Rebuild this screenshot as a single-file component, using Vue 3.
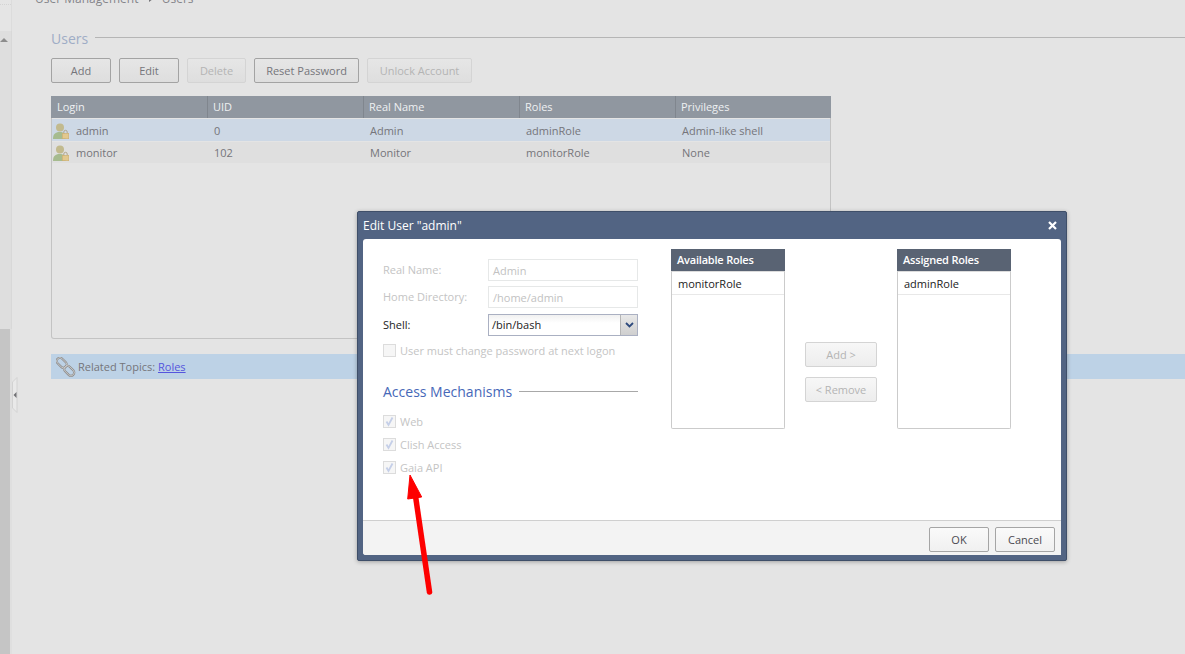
<script setup>
const users = [
  { login: 'admin', uid: '0', name: 'Admin', roles: 'adminRole', priv: 'Admin-like shell', selected: true },
  { login: 'monitor', uid: '102', name: 'Monitor', roles: 'monitorRole', priv: 'None', selected: false },
]
const access = ['Web', 'Clish Access', 'Gaia API']
</script>

<template>
  <div class="page">
    <aside class="rail">
      <div class="rail-head"></div>
      <div class="rail-top">
        <span class="up"></span>
      </div>
      <div class="rail-low"></div>
      <svg class="grip" width="6" height="36" viewBox="0 0 6 36">
        <path d="M5 .5L.5 5v26L5 35.500z" fill="#e9e9e9" stroke="#d2d2d2" />
        <path d="M1.500 18L4.500 15v6z" fill="#707074" />
      </svg>
    </aside>

    <main class="content">
      <div class="crumbs">User Management <span class="sep"></span> Users</div>

      <div class="legend"><span>Users</span><i></i></div>

      <div class="toolbar">
        <button class="btn w60">Add</button>
        <button class="btn w60">Edit</button>
        <button class="btn w59 off">Delete</button>
        <button class="btn w105">Reset Password</button>
        <button class="btn w105 off">Unlock Account</button>
      </div>

      <div class="grid">
        <div class="row head">
          <div>Login</div><div>UID</div><div>Real Name</div><div>Roles</div><div>Privileges</div>
        </div>
        <div v-for="u in users" :key="u.login" class="row" :class="{ selected: u.selected }">
          <div class="login">
            <svg width="16" height="16" viewBox="0 0 16 16">
              <circle cx="7" cy="4.500" r="4" fill="#c2ba8e" />
              <path d="M0 16c0-5 2.500-7 6.500-7 2.500 0 4 .5 6 2v5z" fill="#a6bb8f" />
              <rect x="9.300" y="10.300" width="6.400" height="5.400" fill="#e2c88e" stroke="#cfb06e" stroke-width=".6" />
              <path d="M10.800 10.300V9a1.700 1.700 0 0 1 3.400 0v1.300" fill="none" stroke="#b0a68c" />
            </svg>
            <span>{{ u.login }}</span>
          </div>
          <div>{{ u.uid }}</div>
          <div>{{ u.name }}</div>
          <div>{{ u.roles }}</div>
          <div>{{ u.priv }}</div>
        </div>
      </div>

      <div class="related">
        <svg width="20" height="20" viewBox="0 0 20 20" fill="none">
          <g stroke="#8f8f8f" stroke-width="2.200">
            <rect x="0" y="2.500" width="11.500" height="6.500" rx="3.200" transform="rotate(45 5.700 5.700)" />
            <rect x="7.500" y="10.500" width="11.500" height="6.500" rx="3.200" transform="rotate(45 13.200 13.700)" />
          </g>
          <g stroke="#cfcfcf" stroke-width=".8">
            <rect x="0" y="2.500" width="11.500" height="6.500" rx="3.200" transform="rotate(45 5.700 5.700)" />
            <rect x="7.500" y="10.500" width="11.500" height="6.500" rx="3.200" transform="rotate(45 13.200 13.700)" />
          </g>
        </svg>
        <span>Related Topics: <a>Roles</a></span>
      </div>
    </main>

    <div class="dialog">
      <div class="title">
        <span>Edit User "admin"</span>
        <svg class="close" width="9" height="9" viewBox="0 0 9 9">
          <path d="M1 1l7 7M8 1L1 8" stroke="#fff" stroke-width="2.200" />
        </svg>
      </div>
      <div class="body">
        <div class="main">
          <div class="left">
            <div class="field off"><label>Real Name:</label><div class="input">Admin</div></div>
            <div class="field off"><label>Home Directory:</label><div class="input">/home/admin</div></div>
            <div class="field shell"><label>Shell:</label>
              <div class="select">
                <span>/bin/bash</span>
                <b><svg width="9" height="6" viewBox="0 0 9 6"><path d="M1 1l3.500 3.500L8 1" fill="none" stroke="#2e4a7d" stroke-width="1.800" /></svg></b>
              </div>
            </div>
            <div class="check plain"><span class="box"></span>User must change password at next logon</div>

            <div class="section"><span>Access Mechanisms</span><i></i></div>

            <div v-for="a in access" :key="a" class="check">
              <span class="box">
                <svg width="11" height="11" viewBox="0 0 11 11"><path d="M2.500 5.500l2 3.500L8.500 1.500" fill="none" stroke="#c5cfe8" stroke-width="1.800" /></svg>
              </span>{{ a }}
            </div>
          </div>

          <div class="roles">
            <div class="list">
              <div class="list-head">Available Roles</div>
              <div class="list-body"><div class="item">monitorRole</div></div>
            </div>
            <div class="mover">
              <button class="btn mini off">Add &gt;</button>
              <button class="btn mini off">&lt; Remove</button>
            </div>
            <div class="list">
              <div class="list-head">Assigned Roles</div>
              <div class="list-body"><div class="item">adminRole</div></div>
            </div>
          </div>
        </div>
        <div class="footer">
          <button class="btn foot">OK</button>
          <button class="btn foot">Cancel</button>
        </div>
      </div>
    </div>

    <svg class="arrow" width="40" height="130" viewBox="0 0 40 130">
      <path d="M10 5L7.700 29 21.700 27z" fill="#fe0000" stroke="#fe0000" stroke-linejoin="round" />
      <path d="M15.500 26L29.500 122" stroke="#fe0000" stroke-width="5.500" stroke-linecap="round" />
    </svg>
  </div>
</template>

<style scoped>
.page {
  position: relative;
  display: flex;
  width: 1185px;
  height: 654px;
  overflow: hidden;
  background: #e4e4e4;
  color: #75757a;
  font: 11px "Open Sans", "Liberation Sans", sans-serif;
}

.rail {
  position: relative;
  display: flex;
  flex-direction: column;
  flex: 0 0 12px;
}

.rail-head {
  height: 31px;
  background: #e5e5e5;
  border-right: 1px solid #dcdcdc;
  box-sizing: border-box;
}

.rail-head::before {
  content: "";
  display: block;
  height: 4px;
  border-bottom: 1px dotted #d4d4d4;
}

.rail-top {
  height: 298px;
  background: #dedede;
  border-right: 1px solid #d8d8d8;
  box-sizing: border-box;
}

.up {
  display: block;
  width: 0;
  margin: 7px 0 0 0;
  border: 4px solid transparent;
  border-top: 0;
  border-bottom-color: #8d8d8d;
}

.rail-low {
  flex: 1;
  background: #c5c5c5;
  border-right: 2px solid #dfdfdf;
}

.grip {
  position: absolute;
  left: 12px;
  top: 377px;
}

.content {
  flex: 1;
  min-width: 0;
  padding: 0 0 0 39px;
}

.crumbs {
  margin: -9px 0 0 -16px;
  height: 16px;
  line-height: 16px;
  font-size: 12px;
  color: #85858a;
}

.sep {
  display: inline-block;
  margin: 0 6px 1px 7px;
  border: 3px solid transparent;
  border-right: 0;
  border-left: 4px solid #76767a;
}

.legend {
  display: flex;
  align-items: center;
  margin-top: 22px;
  height: 18px;
  font-size: 14px;
  color: #9fadc6;
}

.legend i {
  flex: 1;
  height: 1px;
  margin: 0 0 2px 7px;
  background: #b5b5b5;
}

.toolbar {
  display: flex;
  gap: 8px;
  margin-top: 11px;
}

.btn {
  height: 25px;
  padding: 0;
  background: linear-gradient(#e6e6e6, #dedede);
  border: 1px solid #a3a3a3;
  border-radius: 2px;
  color: #75757a;
  font: inherit;
  box-sizing: border-box;
}

.btn.off {
  border-color: #d4d4d4;
  color: #b4b4b4;
}

.w60 { width: 60px; }
.w59 { width: 59px; }
.w105 { width: 105px; }

.grid {
  width: 780px;
  height: 243px;
  margin-top: 13px;
  border: 1px solid #c3c3c3;
  border-top: 0;
  border-radius: 0 0 3px 3px;
  box-sizing: border-box;
}

.row {
  display: grid;
  grid-template-columns: 156px 156px 156px 156px 1fr;
  height: 21px;
  line-height: 22px;
  background: #dfdfdf;
}

.row > div {
  padding-left: 6px;
}

.row.selected {
  height: 22px;
  line-height: 24px;
  background: #cdd8e5;
  margin-bottom: 1px;
}

.row.head {
  height: 22px;
  margin: 0 -1px 1px -1px;
  background: #9097a0;
  color: #eef0f2;
}

.row.head > div + div {
  padding-left: 5px;
  border-left: 1px solid #80868e;
}

.row > .login {
  display: flex;
  align-items: center;
  gap: 7px;
  padding-left: 1px;
}

.related {
  display: flex;
  align-items: center;
  gap: 2px;
  height: 25px;
  margin-top: 15px;
  padding-left: 5px;
  background: #bdd2e6;
  line-height: 25px;
}

.related a {
  color: #5555dd;
  text-decoration: underline;
}

.dialog {
  position: absolute;
  left: 357px;
  top: 211px;
  width: 710px;
  height: 350px;
  padding: 0 5px 5px;
  background: #526483;
  border: 1px solid #3f4f69;
  border-radius: 2px;
  box-shadow: 0 1px 4px rgba(0, 0, 0, .3);
  box-sizing: border-box;
  display: flex;
  flex-direction: column;
}

.title {
  display: flex;
  align-items: center;
  justify-content: space-between;
  flex: 0 0 27px;
  padding: 0 4px 1px 0;
  box-sizing: border-box;
  color: #fff;
  font-size: 12px;
}

.body {
  flex: 1;
  display: flex;
  flex-direction: column;
  min-height: 0;
  background: #fff;
  border-radius: 3px 3px 0 3px;
  overflow: hidden;
}

.main {
  flex: 1;
  display: flex;
  padding: 10px 0 0 20px;
}

.left {
  width: 255px;
  padding-top: 10px;
  color: #c4c4c4;
}

.field {
  display: flex;
  align-items: center;
  height: 22px;
  margin-bottom: 5px;
}

.field.shell {
  margin-top: 6px;
}

.field label {
  flex: 0 0 105px;
  margin-bottom: 2px;
}

.field:not(.off) label {
  color: #222;
}

.input {
  flex: 1;
  height: 22px;
  line-height: 22px;
  padding-left: 4px;
  border: 1px solid #e6e8e8;
  box-sizing: border-box;
  color: #c2c2c2;
}

.select {
  flex: 1;
  display: flex;
  justify-content: space-between;
  height: 22px;
  padding-left: 3px;
  line-height: 20px;
  border: 1px solid #aab0c2;
  box-sizing: border-box;
  background: linear-gradient(#f1f1f1, #fff 40%);
  color: #222;
}

.select b {
  display: flex;
  align-items: center;
  justify-content: center;
  width: 16px;
  background: linear-gradient(#e8e8e8, #cfcfcf);
  border-left: 1px solid #b5b5b5;
}

.check {
  display: flex;
  align-items: center;
  gap: 4px;
  height: 23px;
}

.check.plain {
  margin-top: -3px;
  height: 25px;
}

.box {
  display: flex;
  align-items: center;
  justify-content: center;
  width: 11px;
  height: 11px;
  border: 1px solid #dcdcdc;
  background: #f6f6f6;
  box-sizing: content-box;
}

.section {
  display: flex;
  align-items: center;
  height: 20px;
  margin: 18px 0 9px;
  color: #4668b8;
  font-size: 14px;
}

.section i {
  flex: 1;
  height: 1px;
  margin-left: 7px;
  background: #a8a8a8;
}

.roles {
  display: flex;
  margin-left: 33px;
  height: 180px;
}

.list {
  width: 114px;
}

.list-head {
  height: 22px;
  padding-left: 6px;
  line-height: 22px;
  background: #596373;
  color: #fff;
  font-weight: 600;
  letter-spacing: -.2px;
}

.list-body {
  height: 158px;
  border: 1px solid #cbcbcb;
  border-top: 1px solid #dcdcdc;
  border-radius: 0 0 2px 2px;
  box-sizing: border-box;
}

.item {
  height: 22px;
  padding-left: 6px;
  line-height: 24px;
  border-bottom: 1px solid #e8e8e8;
  color: #222;
}

.mover {
  display: flex;
  flex-direction: column;
  gap: 10px;
  width: 112px;
  align-items: center;
  padding-top: 93px;
  box-sizing: border-box;
}

.btn.mini {
  width: 72px;
  background: linear-gradient(#f7f7f7, #ededed);
}

.footer {
  display: flex;
  justify-content: flex-end;
  gap: 6px;
  flex: 0 0 35px;
  padding: 6px 6px 0 0;
  background: #f3f3f3;
  border-top: 1px solid #cfcfcf;
  box-sizing: border-box;
}

.btn.foot {
  width: 60px;
  background: linear-gradient(#fafafa, #f0f0f0);
  border-color: #a5a5a5;
  color: #4a4a50;
}

.arrow {
  position: absolute;
  left: 400px;
  top: 470px;
}
</style>
